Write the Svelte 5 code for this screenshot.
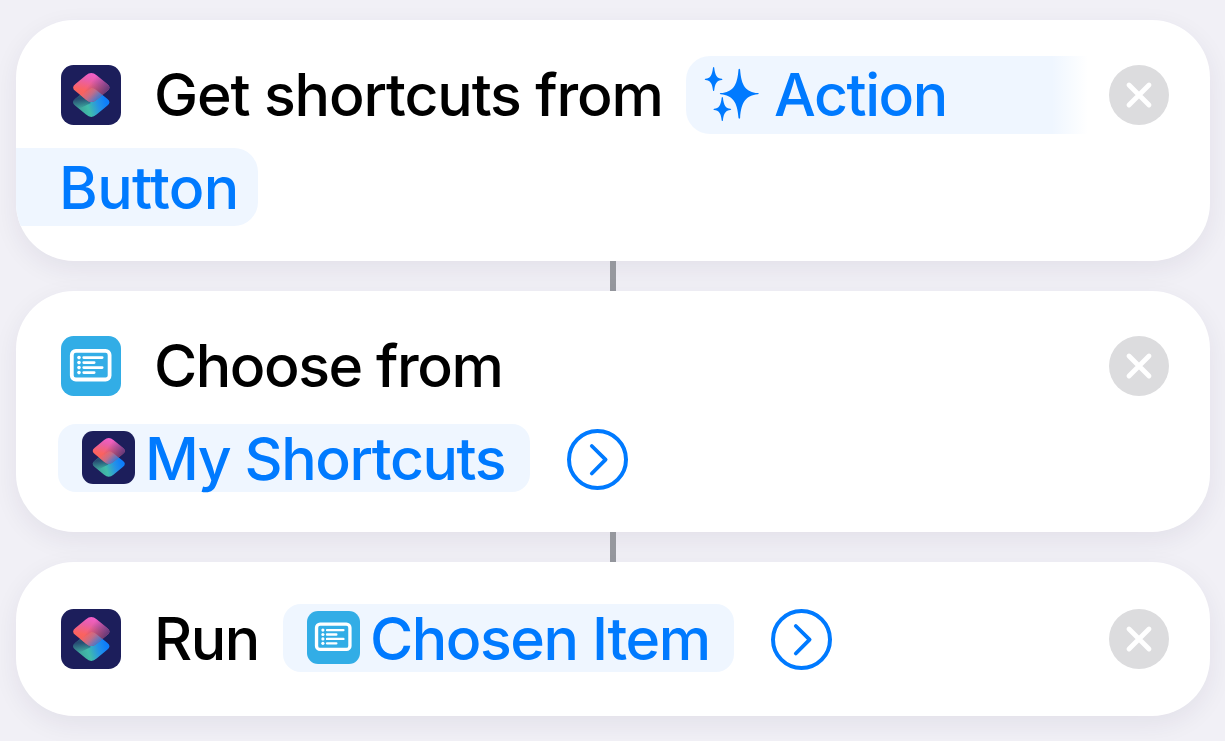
<!-- App.svelte -->
<!-- Shortcut editor: a column of action cards joined by connector lines. -->

<script>
    let actions = [
        { id: 1, icon: 'shortcuts', label: 'Get shortcuts from', kind: 'get' },
        { id: 2, icon: 'list', label: 'Choose from', kind: 'choose' },
        { id: 3, icon: 'shortcuts', label: 'Run', kind: 'run' },
    ];

    const remove = (id) => {
        actions = actions.filter((a) => a.id !== id);
    };
</script>

{#snippet appIcon(name, size)}
    {#if name === 'shortcuts'}
        <svg class="app-icon {size}" viewBox="0 0 60 60">
            <defs>
                <linearGradient id="pink" x1="0.65" y1="0" x2="0.35" y2="1">
                    <stop offset="0" stop-color="#f45fd0" />
                    <stop offset="0.3" stop-color="#e95fa8" />
                    <stop offset="0.65" stop-color="#fb6360" />
                    <stop offset="1" stop-color="#f0605c" />
                </linearGradient>
                <linearGradient id="shade" x1="0.5" y1="0.3" x2="1" y2="0.6">
                    <stop offset="0" stop-color="#4a3278" stop-opacity="0" />
                    <stop offset="1" stop-color="#4a3278" stop-opacity="0.9" />
                </linearGradient>
                <linearGradient id="teal" x1="0.1" y1="0.6" x2="0.9" y2="0.4">
                    <stop offset="0" stop-color="#3fa19a" />
                    <stop offset="0.35" stop-color="#41bdaa" />
                    <stop offset="0.7" stop-color="#2593e6" />
                    <stop offset="1" stop-color="#0d7dfb" />
                </linearGradient>
                <linearGradient id="dim" x1="0.5" y1="0" x2="0.5" y2="1">
                    <stop offset="0.3" stop-color="#1c2560" stop-opacity="0.7" />
                    <stop offset="1" stop-color="#1c2560" stop-opacity="0" />
                </linearGradient>
                <linearGradient id="fold" x1="0.1" y1="0.3" x2="0.8" y2="0.75">
                    <stop offset="0" stop-color="#fb6360" />
                    <stop offset="0.5" stop-color="#c47492" />
                    <stop offset="1" stop-color="#3d86e0" />
                </linearGradient>
            </defs>
            <rect width="60" height="60" rx="12.5" fill="#1c1e5b" />
            <path d="M25 25.2Q30.3 20.6 35.6 25.2L46.2 33.8Q50.8 37.3 46.2 40.8L35.6 49.6Q30.3 54.2 25 49.6L14.4 40.8Q9.8 37.3 14.4 33.8Z" fill="url(#teal)" />
            <path d="M14.4 33.8L19.6 29.6L30 38L18 43.8L14.4 40.8Q9.8 37.3 14.4 33.8Z" fill="url(#dim)" />
            <path d="M25 10.2Q30.3 5.8 35.6 10.2L46.2 18.9Q50.8 22.5 46.2 26.1L35.6 34.7Q30.3 39.2 25 34.7L14.4 26.1Q9.8 22.5 14.4 18.9Z" fill="url(#pink)" />
            <path d="M25 10.2Q30.3 5.8 35.6 10.2L46.2 18.9Q50.8 22.5 46.2 26.1L35.6 34.7Q30.3 39.2 25 34.7L14.4 26.1Q9.8 22.5 14.4 18.9Z" fill="url(#shade)" />
            <path d="M30.3 22.9Q33 22.9 35.6 25.2L41.4 30L35.6 34.7Q30.3 39.2 25 34.7L19.6 30Z" fill="url(#fold)" opacity="0.8" />
        </svg>
    {:else}
        <svg class="app-icon {size}" viewBox="0 0 60 60">
            <rect width="60" height="60" rx="12.5" fill="#32ade6" />
            <rect x="10.8" y="14.9" width="37.8" height="28.6" rx="4" fill="none" stroke="#fff" stroke-width="3.8" />
            <g fill="#fff">
                {#each [21.6, 26.6, 31.6, 36.6] as y}
                    <circle cx="18" cy={y} r="1.8" />
                {/each}
            </g>
            <path d="M22.7 21.6H41.2M22.7 26.6H33.2M22.7 31.6H41.2M22.7 36.6H33.2" stroke="#fff" stroke-width="2.7" stroke-linecap="round" />
        </svg>
    {/if}
{/snippet}

{#snippet expand()}
    <button class="expand" aria-label="Show more">
        <svg viewBox="0 0 61 61">
            <circle cx="30.5" cy="30.5" r="28.5" fill="none" stroke="#007aff" stroke-width="4" />
            <path d="M24.8 17L38.6 30.6L24.8 44.5" fill="none" stroke="#007aff" stroke-width="3.8" stroke-linecap="round" stroke-linejoin="round" />
        </svg>
    </button>
{/snippet}

<main>
    {#each actions as action, i (action.id)}
        {#if i > 0}
            <div class="connector"></div>
        {/if}
        <section class="card {action.kind}">
            <div class="row">
                {@render appIcon(action.icon, 'large')}
                <span class="label">{action.label}</span>

                {#if action.kind === 'get'}
                    <span class="token broken">
                        <svg class="sparkles" viewBox="0 0 56 56">
                            <path d="M34.5 2.4Q35.3 1 36.1 2.4C37.3 19 42 25 53.8 26.1Q55.8 26.7 53.8 27.3C42 28.8 37.3 34.5 36.1 51Q35.3 52.4 34.5 51C33.3 34.5 28.6 28.8 16.8 27.3Q14.8 26.7 16.8 26.1C28.6 25 33.3 19 34.5 2.4Z" />
                            <path d="M9 0.4Q9.6 -0.6 10.2 0.4C11 8.5 13 11.2 17.8 11.8Q19.4 12.4 17.8 13C13 13.6 11 16 10.2 23.6Q9.6 24.6 9 23.6C8.2 16 6.2 13.6 1.4 13Q-0.2 12.4 1.4 11.8C6.2 11.2 8.2 8.5 9 0.4Z" />
                            <path d="M17.7 30.4Q18.3 29.4 18.9 30.4C19.7 38.5 21.7 41.2 26.5 41.8Q28.1 42.4 26.5 43C21.7 43.6 19.7 46 18.9 53.6Q18.3 54.6 17.7 53.6C16.9 46 14.9 43.6 10.1 43Q8.5 42.4 10.1 41.8C14.9 41.2 16.9 38.5 17.7 30.4Z" />
                        </svg>
                        <span class="text">Action</span>
                    </span>
                {:else if action.kind === 'run'}
                    <span class="token">
                        {@render appIcon('list', 'small')}
                        <span class="text">Chosen Item</span>
                    </span>
                    {@render expand()}
                {/if}

                <button class="delete" aria-label="Remove action" on:click={() => remove(action.id)}>
                    <svg viewBox="0 0 60 60">
                        <circle cx="30" cy="30" r="30" fill="#dcdcde" />
                        <path d="M20 20L40 40M40 20L20 40" stroke="#fff" stroke-width="4.8" stroke-linecap="round" />
                    </svg>
                </button>
            </div>

            {#if action.kind === 'get'}
                <div class="row">
                    <span class="token rest"><span class="text">Button</span></span>
                </div>
            {:else if action.kind === 'choose'}
                <div class="row second">
                    <span class="token">
                        {@render appIcon('shortcuts', 'small')}
                        <span class="text">My Shortcuts</span>
                    </span>
                    {@render expand()}
                </div>
            {/if}
        </section>
    {/each}
</main>

<style>
    :global(body) {
        background: #f1f0f6;
    }

    main {
        box-sizing: border-box;
        width: 1225px;
        height: 741px;
        padding: 20px 15px 0 16px;
        overflow: hidden;
        font-family: Inter, sans-serif;
        font-size: 59px;
        font-weight: 500;
        letter-spacing: -1.45px;
        line-height: 78px;
        white-space: nowrap;
    }

    .card {
        box-sizing: border-box;
        display: flex;
        flex-direction: column;
        gap: 14px;
        height: 241px;
        padding: 36px 41px 35px 45px;
        border-radius: 58px;
        background: #fff;
        box-shadow: 0 8px 26px rgba(40, 30, 70, 0.07);
        overflow: hidden;
    }

    .card.run {
        height: 154px;
        padding-top: 38px;
        padding-bottom: 38px;
    }

    .connector {
        width: 6px;
        height: 30px;
        margin: 0 auto;
        background: #96989e;
    }

    .row {
        display: flex;
        align-items: center;
        height: 78px;
        flex: none;
    }

    .app-icon {
        display: block;
        flex: none;
    }

    .large {
        width: 60px;
        height: 60px;
    }

    .small {
        width: 53px;
        height: 53px;
        margin-bottom: 1px;
    }

    .label {
        width: 508px;
        margin-left: 33px;
        color: #000;
    }

    .get .label {
        letter-spacing: -1.15px;
    }

    .run .label {
        width: 104px;
    }

    .token {
        box-sizing: border-box;
        display: flex;
        align-items: center;
        flex: none;
        height: 68px;
        padding-left: 24px;
        border-radius: 18px;
        background: #eff6ff;
        color: #007aff;
    }

    .run .token {
        width: 451px;
        margin-left: 25px;
        margin-bottom: 2px;
    }

    .second .token {
        width: 472px;
        margin-left: -3px;
    }

    .small + .text {
        padding-top: 2px;
        margin-left: 10px;
    }

    .token.broken {
        width: 402px;
        height: 78px;
        margin-left: 24px;
        margin-bottom: 1px;
        padding-left: 18px;
        border-radius: 24px 0 0 24px;
        background: linear-gradient(to right, #eff6ff 91%, #fff);
    }

    .token.rest {
        width: 242px;
        height: 78px;
        margin-left: -45px;
        padding-left: 43px;
        border-radius: 0 24px 24px 0;
        letter-spacing: -0.6px;
    }

    .rest .text {
        padding-top: 1px;
    }

    .sparkles {
        width: 56px;
        height: 56px;
        margin-right: 14px;
        fill: #007aff;
        overflow: visible;
    }

    button {
        flex: none;
        padding: 0;
        border: none;
        background: none;
        cursor: pointer;
    }

    button svg {
        display: block;
        width: 100%;
        height: 100%;
    }

    .expand {
        width: 61px;
        height: 61px;
        margin-left: 37px;
    }

    .second .expand {
        margin-top: 2px;
    }

    .delete {
        width: 60px;
        height: 60px;
        margin-left: auto;
    }
</style>
